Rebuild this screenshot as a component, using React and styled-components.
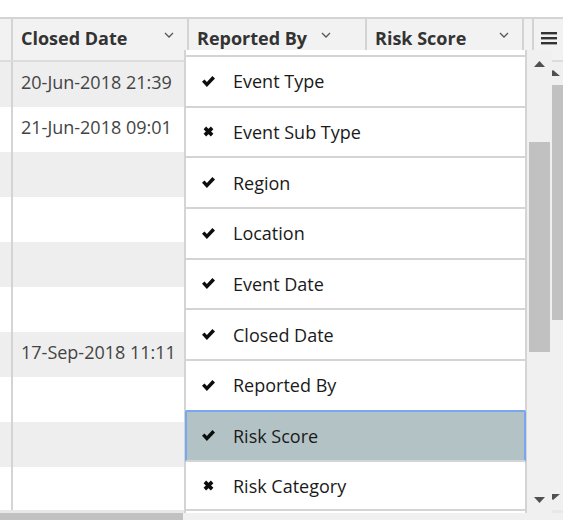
import styled, { createGlobalStyle } from 'styled-components'

//! Data
const columns = [
    { key: 'lead', width: 13 },
    { key: 'closed', width: 176, label: 'Closed Date' },
    { key: 'reported', width: 178, label: 'Reported By', tight: true },
    { key: 'risk', width: 157, label: 'Risk Score' },
    { key: 'pad', width: 10 }
]

const rows = [
    '20-Jun-2018 21:39',
    '21-Jun-2018 09:01',
    '',
    '',
    '',
    '',
    '17-Sep-2018 11:11',
    '',
    '',
    ''
]

const menuItems = [
    { label: 'Event Type', on: true },
    { label: 'Event Sub Type', on: false },
    { label: 'Region', on: true },
    { label: 'Location', on: true },
    { label: 'Event Date', on: true },
    { label: 'Closed Date', on: true },
    { label: 'Reported By', on: true },
    { label: 'Risk Score', on: true, active: true },
    { label: 'Risk Category', on: false }
]

//! Styles
const GlobalStyle = createGlobalStyle`
    html, body {
        margin: 0;
        padding: 0;
        background: #fff;
    }
    body {
        font-family: 'Open Sans', 'Liberation Sans', sans-serif;
        overflow: hidden;
    }
`

const Page = styled.div`
    position: relative;
    width: 563px;
    height: 520px;
    overflow: hidden;
    padding-top: 17px;
    box-sizing: border-box;
`

const Grid = styled.div`
    display: flex;
    flex-direction: column;
    border-top: 2px solid #d4d4d4;
`

const HeaderRow = styled.div`
    display: flex;
    height: 41px;
    background: #f2f2f2;
    border-bottom: 2px solid #dcdcdc;
`

const HeaderCell = styled.div`
    width: ${({ w }) => w}px;
    flex-shrink: 0;
    box-sizing: border-box;
    display: flex;
    align-items: flex-start;
    padding: ${({ w }) => (w > 20 ? '7px 0 0 8px' : '0')};
    border-right: 2px solid #d4d4d4;
    font-size: 18px;
    line-height: 24px;
    font-weight: 700;
    color: #333;
    white-space: nowrap;
`

const MenuCell = styled.div`
    flex: 1;
    display: flex;
    align-items: flex-start;
    padding: 13px 0 0 7px;
`

const Chevron = styled.svg`
    width: 10px;
    height: 6px;
    margin-top: 6px;
    margin-left: ${({ tight }) => (tight ? '14px' : 'auto')};
    margin-right: 13px;
`

const Body = styled.div`
    display: flex;
    height: 448px;
    overflow: hidden;
`

const Rows = styled.div`
    width: 546px;
    flex-shrink: 0;
`

const Row = styled.div`
    display: flex;
    height: 45px;
    background: ${({ striped }) => (striped ? '#eeeeee' : '#fff')};
`

const Cell = styled.div`
    width: ${({ w }) => w}px;
    flex-shrink: 0;
    box-sizing: border-box;
    padding: ${({ w }) => (w > 20 ? '8px 8px 0' : '0')};
    border-right: 2px solid #d4d4d4;
    font-size: 18px;
    line-height: 24px;
    color: #444;
    white-space: nowrap;
    overflow: hidden;
`

const VScroll = styled.div`
    width: 17px;
    display: flex;
    flex-direction: column;
    background: #f0f0f0;
    padding: 8px 0 10px;
    box-sizing: border-box;
`

const Thumb = styled.div`
    background: #c1c1c1;
    width: ${({ w }) => w}px;
    height: ${({ h }) => h}px;
    margin-top: ${({ top }) => top}px;
    margin-left: ${({ left }) => left || 0}px;
    margin-bottom: auto;
`

const HScroll = styled.div`
    height: 10px;
    box-sizing: border-box;
    border-top: 3px solid #e8e8e8;
    background: #f0f0f0;
`

const Menu = styled.div`
    position: absolute;
    left: 184px;
    top: 50px;
    width: 368px;
    height: 463px;
    display: flex;
    overflow: hidden;
    background: #fff;
`

const MenuList = styled.ul`
    flex: 1;
    margin: 0;
    padding: 5px 0 0;
    list-style: none;
    border-left: 2px solid #d4d4d4;
    border-right: 2px solid #d4d4d4;
`

const MenuItem = styled.li`
    position: relative;
    height: 50.67px;
    box-sizing: border-box;
    display: flex;
    align-items: center;
    padding-left: 16px;
    border-top: 2px solid #d4d4d4;
    border-bottom: ${({ last }) => (last ? '2px solid #d4d4d4' : 'none')};
    background: ${({ active }) => (active ? '#b3c3c5' : '#fff')};
    font-size: 18px;
    color: #1a1a1a;
    white-space: nowrap;

    ${({ active }) =>
        active &&
        `
        &::after {
            content: '';
            position: absolute;
            top: -2px;
            bottom: -2px;
            left: -1px;
            right: -1px;
            border: 2px solid #78a6f0;
            border-radius: 2px;
        }
    `}
`

const IconBox = styled.span`
    width: 31px;
    flex-shrink: 0;
    display: flex;
    align-items: center;
`

const MenuScroll = styled.div`
    width: 25px;
    display: flex;
    flex-direction: column;
    align-items: center;
    background: #f0f0f0;
    padding: 11px 0 10px;
    box-sizing: border-box;
`

//! Components
const ChevronIcon = ({ tight }) => (
    <Chevron tight={tight} viewBox="0 0 10 6">
        <polyline
            points="1,1 5,5 9,1"
            fill="none"
            stroke="#555"
            strokeWidth="1.3"
        />
    </Chevron>
)

const Hamburger = () => (
    <svg width="16" height="13" viewBox="0 0 16 13">
        <rect x="0" y="0" width="16" height="2.4" fill="#333" />
        <rect x="0" y="5" width="16" height="2.4" fill="#333" />
        <rect x="0" y="10" width="16" height="2.4" fill="#333" />
    </svg>
)

const Check = () => (
    <svg width="13" height="11" viewBox="0 0 12 10">
        <polygon
            points="0,5.3 2.3,3.1 4.5,5.4 9.6,0 12,2.2 4.5,10"
            fill="#0d0d0d"
        />
    </svg>
)

const Cross = () => (
    <svg width="11" height="11" viewBox="0 0 10 10" style={{ marginLeft: 1 }}>
        <path
            d="M1.7 1.7 L8.3 8.3 M8.3 1.7 L1.7 8.3"
            stroke="#0d0d0d"
            strokeWidth="3.3"
        />
    </svg>
)

const Arrow = ({ down, w = 11 }) => (
    <svg width={w} height="6" viewBox={`0 0 ${w} 6`}>
        <polygon
            points={
                down ? `0,0 ${w},0 ${w / 2},6` : `0,6 ${w},6 ${w / 2},0`
            }
            fill="#505050"
        />
    </svg>
)

//! Page
const App = () => (
    <Page>
        <GlobalStyle />
        <Grid>
            <HeaderRow>
                {columns.map(col => (
                    <HeaderCell key={col.key} w={col.width}>
                        {col.label}
                        {col.label && <ChevronIcon tight={col.tight} />}
                    </HeaderCell>
                ))}
                <MenuCell>
                    <Hamburger />
                </MenuCell>
            </HeaderRow>
            <Body>
                <Rows>
                    {rows.map((value, i) => (
                        <Row key={i} striped={i % 2 === 0}>
                            {columns.map(col => (
                                <Cell key={col.key} w={col.width}>
                                    {col.key === 'closed' ? value : ''}
                                </Cell>
                            ))}
                        </Row>
                    ))}
                </Rows>
                <VScroll>
                    <Arrow w={14} />
                    <Thumb w={15} h={235} top={9} left={2} />
                    <Arrow w={14} down />
                </VScroll>
            </Body>
            <HScroll>
                <Thumb w={183} h={7} top={0} />
            </HScroll>
        </Grid>

        <Menu>
            <MenuList>
                {menuItems.map((item, i) => (
                    <MenuItem
                        key={item.label}
                        active={item.active}
                        last={i === menuItems.length - 1}
                    >
                        <IconBox>{item.on ? <Check /> : <Cross />}</IconBox>
                        {item.label}
                    </MenuItem>
                ))}
            </MenuList>
            <MenuScroll>
                <Arrow />
                <Thumb w={21} h={210} top={75} />
                <Arrow down />
            </MenuScroll>
        </Menu>
    </Page>
)

export default App
